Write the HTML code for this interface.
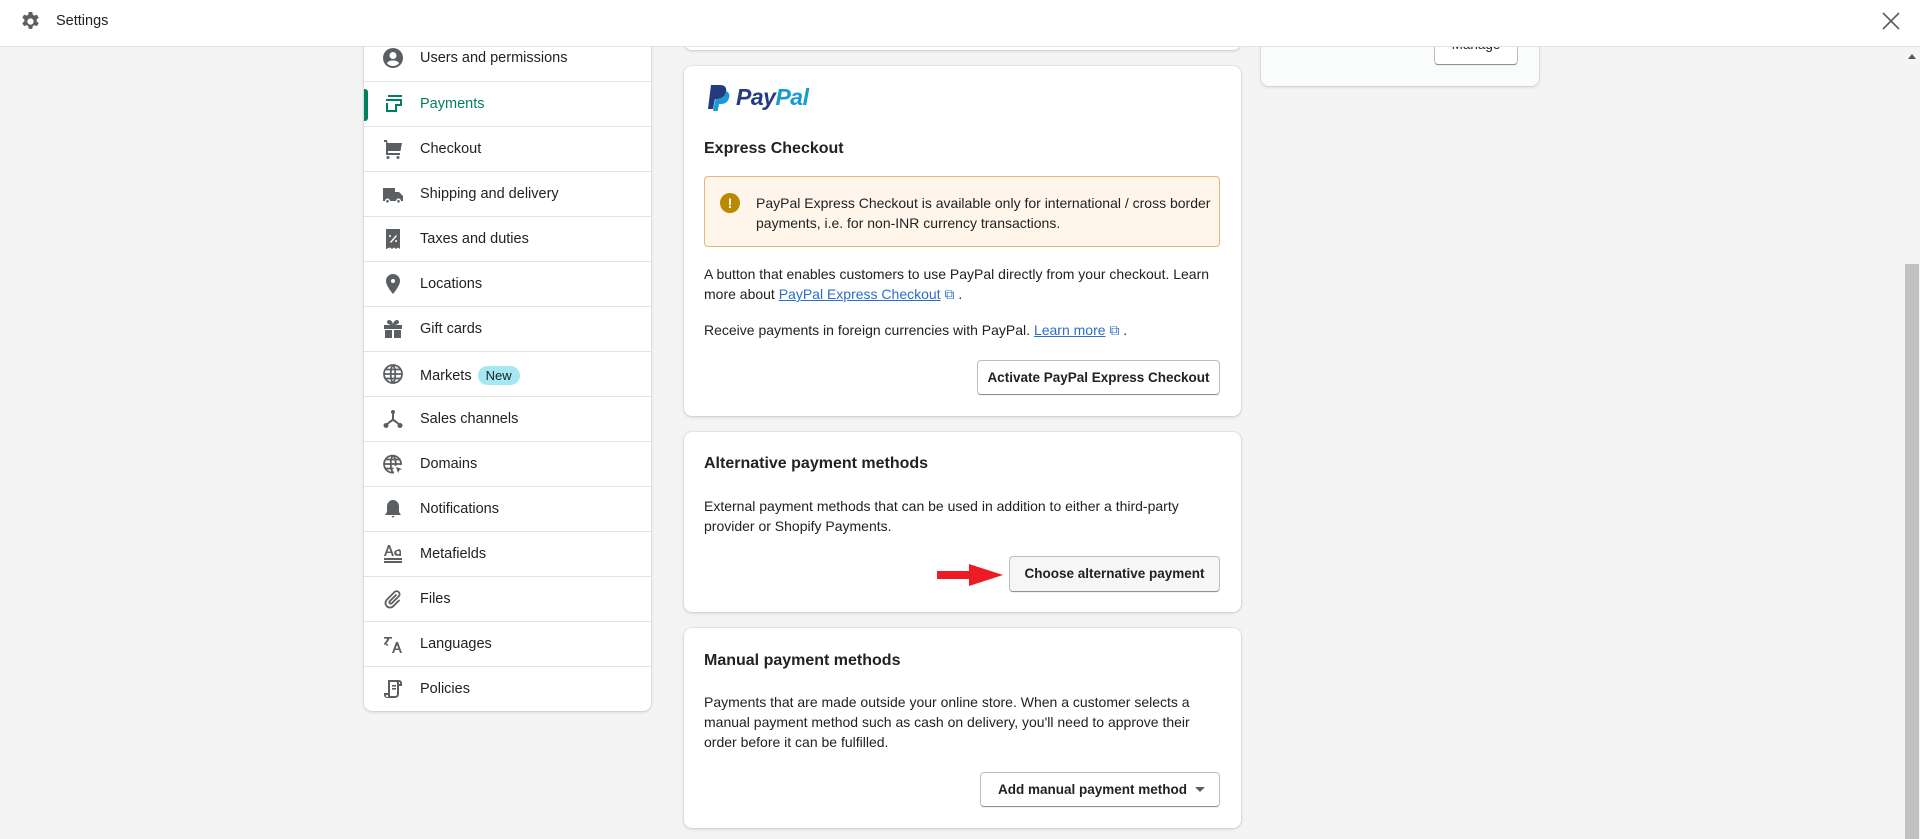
<!DOCTYPE html>
<html><head><meta charset="utf-8"><style>
*{box-sizing:border-box;margin:0;padding:0}
body{width:1920px;height:839px;overflow:hidden;background:#f4f4f4;font-family:"Liberation Sans",Arial,sans-serif;color:#202223;font-size:14px;position:relative}
.hdr{position:absolute;left:0;top:0;width:1920px;height:47px;background:#fff;border-bottom:1px solid #e1e3e5;z-index:10}
.hdr .t{position:absolute;left:56px;top:13px;font-size:14.5px}
.card{position:absolute;background:#fff;border-radius:8px;box-shadow:0 0 0 1px rgba(63,63,68,.05),0 1px 3px rgba(63,63,68,.2)}
.nav{left:364px;top:30px;width:287px;height:681px;border-radius:0 0 8px 8px}
.row{position:absolute;left:0;width:287px;height:45px;border-top:1px solid #e1e3e5}
.row svg{position:absolute;left:19px;top:12px;width:20px;height:20px;fill:#5c5f62}
.row span.l{position:absolute;left:56px;top:14px;font-size:14.5px}
.sel span.l{color:#007f5f}
.ind{position:absolute;left:0;top:7px;width:4px;height:32px;background:#007f5f;border-radius:0 3px 3px 0}
.badge{display:inline-block;background:#a4e8f2;border-radius:10px;padding:2px 8px;font-size:13px;margin-left:6px;color:#202223}
h2{position:absolute;font-size:16px;font-weight:bold;left:20px}
.p{position:absolute;left:20px;line-height:20px;font-size:14px}
.btn{position:absolute;border:1px solid #babfc3;border-bottom-color:#8c9196;border-radius:4px;background:#fff;font-weight:bold;font-size:13.5px;text-align:center;box-shadow:0 1px 0 rgba(0,0,0,.05);white-space:nowrap}
a{color:#2c6ecb;text-decoration:underline}
</style></head><body>
<div class="hdr">
<svg style="position:absolute;left:20px;top:11px" width="21" height="21" viewBox="0 0 20 20"><path fill="#5c5f62" d="M8.3 1h3.4l.5 2.6 1.4.8 2.5-.9 1.7 2.9-2 1.7v1.7l2 1.7-1.7 2.9-2.5-.9-1.4.8-.5 2.7H8.3l-.5-2.7-1.4-.8-2.5.9-1.7-2.9 2-1.7V8.1l-2-1.7 1.7-2.9 2.5.9 1.4-.8zM10 7a3 3 0 100 6 3 3 0 000-6z"/></svg>
<div class="t">Settings</div>
<svg style="position:absolute;left:1881px;top:11px" width="20" height="20" viewBox="0 0 20 20"><path d="M2 2l16 16M18 2L2 18" stroke="#5c5f62" stroke-width="1.6"/></svg>
</div>
<div style="position:absolute;left:1904px;top:47px;width:16px;height:792px;background:#f4f4f4"></div>
<div style="position:absolute;left:1908px;top:54px;width:0;height:0;border-left:4px solid transparent;border-right:4px solid transparent;border-bottom:5px solid #555"></div>
<div style="position:absolute;left:1905px;top:264px;width:14px;height:575px;background:#c1c1c1"></div>

<div class="card nav">
<div class="row" style="top:6px;border-top:none"><svg viewBox="0 0 20 20"><path d="M10 0a10 10 0 100 20 10 10 0 000-20zm0 4a3.5 3.5 0 110 7 3.5 3.5 0 010-7zm0 14a8 8 0 01-6-2.8c.7-1.7 3-2.7 6-2.7s5.3 1 6 2.7A8 8 0 0110 18z"/></svg><span class="l">Users and permissions</span></div>
<div class="row sel" style="top:51px"><div class="ind"></div><svg viewBox="0 0 20 20" style="fill:#007f5f"><path d="M5 1h14v2H5zM3 5h16v7h-5v6H3v-9h2v7h7v-6h5V7H3z"/></svg><span class="l">Payments</span></div>
<div class="row" style="top:96px"><svg viewBox="0 0 20 20"><path d="M1 1h3l.5 3H19l-1.5 8H5v2h12v2H3V3H1zm4 16a1.5 1.5 0 110 3 1.5 1.5 0 010-3zm10 0a1.5 1.5 0 110 3 1.5 1.5 0 010-3z"/></svg><span class="l">Checkout</span></div>
<div class="row" style="top:141px"><svg viewBox="0 0 20 20"><path d="M0 4h12v4h4l4 4v5h-2a2.5 2.5 0 00-5 0H7a2.5 2.5 0 00-5 0H0zM4.5 16a1.3 1.3 0 110 2.6 1.3 1.3 0 010-2.6zm11 0a1.3 1.3 0 110 2.6 1.3 1.3 0 010-2.6z"/></svg><span class="l">Shipping and delivery</span></div>
<div class="row" style="top:186px"><svg viewBox="0 0 20 20"><path d="M3 0h14v20l-2-1.5-2 1.5-2-1.5-2 1.5-2-1.5L3 20zm4 6a1 1 0 100 2 1 1 0 000-2zm6 5a1 1 0 100 2 1 1 0 000-2zm0-5l-6 7 1 1 6-7z"/></svg><span class="l">Taxes and duties</span></div>
<div class="row" style="top:231px"><svg viewBox="0 0 20 20"><path d="M10 0a7 7 0 00-7 7c0 5 7 13 7 13s7-8 7-13a7 7 0 00-7-7zm0 5a2 2 0 110 4 2 2 0 010-4z"/></svg><span class="l">Locations</span></div>
<div class="row" style="top:276px"><svg viewBox="0 0 20 20"><path d="M1 6h18v4H1zm1 5h7v8H2zm9 0h7v8h-7zM6 1c2 0 4 2 4 5-3 0-6-1-6-3 0-1 1-2 2-2zm8 0c1 0 2 1 2 2 0 2-3 3-6 3 0-3 2-5 4-5z"/></svg><span class="l">Gift cards</span></div>
<div class="row" style="top:321px"><svg viewBox="0 0 20 20"><path fill="none" stroke="#5c5f62" stroke-width="1.8" d="M10 1a9 9 0 100 18 9 9 0 000-18zM1 10h18M10 1c-3 3-3 15 0 18M10 1c3 3 3 15 0 18M2.5 5.5h15M2.5 14.5h15"/></svg><span class="l">Markets<span class="badge">New</span></span></div>
<div class="row" style="top:366px"><svg viewBox="0 0 20 20"><path d="M10 1a2 2 0 110 4 2 2 0 010-4zM9 5h2v5l5 4-1 1.5-5-3.5-5 3.5L4 14l5-4zM3 14a2.5 2.5 0 110 5 2.5 2.5 0 010-5zm14 0a2.5 2.5 0 110 5 2.5 2.5 0 010-5z"/></svg><span class="l">Sales channels</span></div>
<div class="row" style="top:411px"><svg viewBox="0 0 20 20"><path fill="none" stroke="#5c5f62" stroke-width="1.8" d="M18 11A8.5 8.5 0 1011 18.5M1.5 10h17M10 1.5c-3 3-3 14 0 17M10 1.5c3 3 3 8 2.5 10.5M2.5 5.5h15M2.5 14.5h8"/><path d="M13 13l6 2-2.5 1L15 19z"/></svg><span class="l">Domains</span></div>
<div class="row" style="top:456px"><svg viewBox="0 0 20 20"><path d="M10 1c3.5 0 6 3 6 6.5V13l2 3H2l2-3V7.5C4 4 6.5 1 10 1zm-1.5 16h3l-1.5 2z"/></svg><span class="l">Notifications</span></div>
<div class="row" style="top:501px"><svg viewBox="0 0 20 20"><path d="M5 1h2l4 11H9l-1-3H4l-1 3H1zm1 2.5L4.5 7.5h3zM15 5c2 0 3 1 3 3v4h-2v-.7a3 3 0 11-1-5.3zm0 2a1.6 1.6 0 100 3.2A1.6 1.6 0 0015 7zM1 14h18v2H1zm0 3h18v2H1z"/></svg><span class="l">Metafields</span></div>
<div class="row" style="top:546px"><svg viewBox="0 0 20 20"><path fill="none" stroke="#5c5f62" stroke-width="1.8" stroke-linecap="round" d="M13 6l-6.5 6.5a1.5 1.5 0 002 2L16 7a3 3 0 00-4.2-4.2L3.8 10.8a4.5 4.5 0 006.4 6.4L16 11.5"/></svg><span class="l">Files</span></div>
<div class="row" style="top:591px"><svg viewBox="0 0 20 20"><path d="M1 3h8v1.6H6.3c-.5 2-1.6 3.6-3 4.8l2 1.4-.9 1.3L2 10.3 1 11V9.4c1.4-1.2 2.5-2.7 3-4.8H1zM13 8h2l4 11h-2l-1-3h-4l-1 3H9zm1 3l-1.4 3.5h2.8z"/></svg><span class="l">Languages</span></div>
<div class="row" style="top:636px"><svg viewBox="0 0 20 20"><path d="M5 1h11a3 3 0 013 3v3h-3v8a4 4 0 01-4 4H4a3 3 0 01-3-3v-2h4zm2 2v14h5a2 2 0 002-2V4a1 1 0 00-1-1zm9.5 0a1 1 0 00-.5 1v1h1V4a1 1 0 00-.5-1zM9 6h4v1.6H9zm0 3h4v1.6H9zM3 16v1a1 1 0 001 1h1v-2z"/></svg><span class="l">Policies</span></div>
</div>

<div class="card" style="left:684px;top:20px;width:557px;height:30px"></div>

<div class="card" style="left:684px;top:66px;width:557px;height:350px">
<div style="position:absolute;left:23px;top:19px;width:24px;height:25px">
<svg width="24" height="26" viewBox="0 0 24 26"><path fill="#253b80" d="M4 0h9c5 0 7 3 6 7-1 5-5 7-9 7H8l-2 10H1z"/><path fill="#179bd7" d="M19 6c3 1 4 4 3 7-1 4-4 6-8 6h-2l-1.3 7H6l1-5 1.5-7h2c5 0 8-3 8.5-8z"/></svg></div>
<div style="position:absolute;left:52px;top:18px;font-size:23px;font-weight:bold;font-style:italic;letter-spacing:-0.5px"><span style="color:#253b80">Pay</span><span style="color:#179bd7">Pal</span></div>
<h2 style="top:74px">Express Checkout</h2>
<div style="position:absolute;left:20px;top:110px;width:516px;height:71px;background:#fff5ea;border:1px solid #e1b878;border-radius:4px">
<div style="position:absolute;left:15px;top:16px;width:20px;height:20px;border-radius:50%;background:#b98900;color:#fff;font-weight:bold;text-align:center;line-height:20px;font-size:14px">!</div>
<div style="position:absolute;left:51px;top:16px;line-height:20px">PayPal Express Checkout is available only for international / cross border<br>payments, i.e. for non-INR currency transactions.</div>
</div>
<div class="p" style="top:198px">A button that enables customers to use PayPal directly from your checkout. Learn<br>more about <a>PayPal Express Checkout</a> <span style="color:#2c6ecb">⧉</span> .</div>
<div class="p" style="top:254px">Receive payments in foreign currencies with PayPal. <a>Learn more</a> <span style="color:#2c6ecb">⧉</span> .</div>
<div class="btn" style="left:293px;top:294px;width:243px;height:35px;line-height:33px">Activate PayPal Express Checkout</div>
</div>

<div class="card" style="left:684px;top:432px;width:557px;height:180px">
<h2 style="top:23px">Alternative payment methods</h2>
<div class="p" style="top:64px">External payment methods that can be used in addition to either a third-party<br>provider or Shopify Payments.</div>
<div class="btn" style="left:325px;top:124px;width:211px;height:36px;line-height:34px;background:#f6f6f7">Choose alternative payment</div>
<svg style="position:absolute;left:253px;top:132px" width="66" height="22" viewBox="0 0 66 22"><path fill="#ed1c24" d="M0 7h32V0l34 11-34 11v-7H0z"/></svg>
</div>

<div class="card" style="left:684px;top:628px;width:557px;height:200px">
<h2 style="top:24px">Manual payment methods</h2>
<div class="p" style="top:64px">Payments that are made outside your online store. When a customer selects a<br>manual payment method such as cash on delivery, you'll need to approve their<br>order before it can be fulfilled.</div>
<div class="btn" style="left:296px;top:144px;width:240px;height:35px;line-height:33px;text-align:left;padding-left:17px">Add manual payment method<span style="position:absolute;right:14px;top:14px;border-left:5px solid transparent;border-right:5px solid transparent;border-top:5px solid #5c5f62"></span></div>
</div>

<div class="card" style="left:1261px;top:20px;width:278px;height:66px;background:#fafbfb">
<div class="btn" style="left:173px;top:0;width:84px;height:45px;padding-top:17px;font-weight:normal;border-top:none;border-radius:0 0 4px 4px">Manage</div>
</div>
</body></html>
